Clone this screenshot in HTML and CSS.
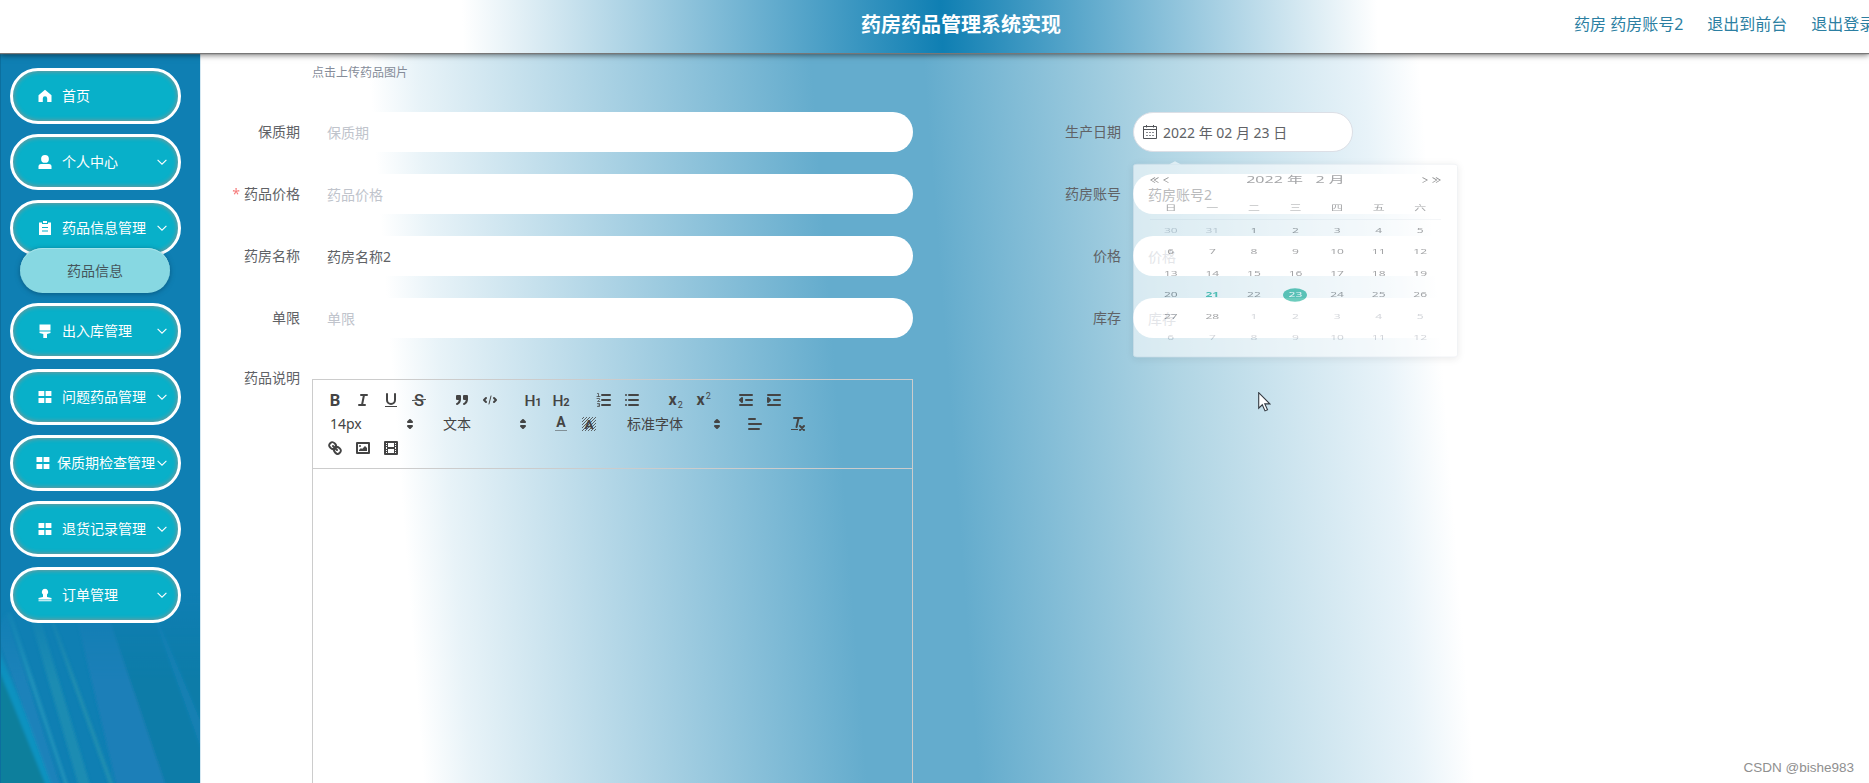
FILE: index.html
```html
<!DOCTYPE html>
<html lang="zh-CN">
<head>
<meta charset="utf-8">
<title>药房药品管理系统实现</title>
<link rel="stylesheet" href="styles.css">
</head>
<body>
<svg width="0" height="0" class="defs">
  <symbol id="down" viewBox="0 0 10 6"><path d="M.6.8 5 5.200 9.400.8" fill="none" stroke="currentColor" stroke-width="1.100"/></symbol>
  <symbol id="grid" viewBox="0 0 14 14"><path d="M.5 1h5.800v5H.5zM7.600 1h5.800v5H7.600zM.5 8h5.800v5H.5zM7.600 8h5.800v5H7.600z" fill="currentColor"/></symbol>
  <symbol id="arrows" viewBox="0 0 18 18"><path class="fs" d="M7 11l2 2 2-2zM7 7l2-2 2 2z"/></symbol>
  <symbol id="prev" viewBox="0 0 6 11"><path d="M5.500 1 .8 5.500l4.700 4.500" fill="none" stroke="currentColor" stroke-width="1.100"/></symbol>
  <symbol id="next" viewBox="0 0 6 11"><path d="M.5 1l4.700 4.500L.5 10" fill="none" stroke="currentColor" stroke-width="1.100"/></symbol>
  <symbol id="prev2" viewBox="0 0 9 11"><path d="M5 1 .8 5.500 5 10M8.500 1 4.300 5.500 8.500 10" fill="none" stroke="currentColor" stroke-width="1.100"/></symbol>
  <symbol id="next2" viewBox="0 0 9 11"><path d="M.5 1l4.200 4.500L.5 10M4 1l4.200 4.500L4 10" fill="none" stroke="currentColor" stroke-width="1.100"/></symbol>
</svg>
<header class="header">
  <h1 class="title">药房药品管理系统实现</h1>
  <nav class="nav"><span>药房 药房账号2</span><span>退出到前台</span><span>退出登录</span></nav>
</header>
<div class="body">
  <aside class="side">
    <svg class="rays" viewBox="0 0 200 730" preserveAspectRatio="none">
      <defs>
        <filter id="soft"><feGaussianBlur stdDeviation="1.6"/></filter>
        <linearGradient id="fade" x1="0" y1="0" x2="0" y2="1"><stop offset=".74" stop-color="#000"/><stop offset=".86" stop-color="#fff"/></linearGradient>
        <mask id="low"><rect width="200" height="730" fill="url(#fade)"/></mask>
      </defs>
      <g filter="url(#soft)" mask="url(#low)">
        <path d="M70 540h150v200h-50z" fill="#0a7ba8"/>
        <path d="M-5 600 50 740H-5z" fill="#087f9c"/>
        <path d="M-5 590-5 610 46 735h10z" fill="#0d92c0"/>
        <path d="M5 560 62 740H54L-5 580z" fill="#1b82ba"/>
        <path d="M38 560 92 740H80L28 560z" fill="#1a8cb2"/>
        <path d="M10 560 70 740h-3L6 560z" fill="#2494bb"/>
        <path d="M50 560 116 740h-4L47 560z" fill="#2090b0"/>
        <path d="M70 540h30l68 200h-50z" fill="#1b7fb8"/>
        <path d="M155 560 206 680v30L152 560z" fill="#1280b3"/>
      </g>
    </svg>
    <ul class="menu">
      <li class="item"><svg class="mi" viewBox="0 0 14 14"><path d="M7 .8.5 6.300V13h4.300V9.500a2.200 2.200 0 0 1 4.400 0V13h4.300V6.300z" fill="currentColor"/></svg><span>首页</span></li>
      <li class="item"><svg class="mi" viewBox="0 0 14 14"><circle cx="7" cy="3.900" r="3.900" fill="currentColor"/><path d="M.5 14v-2.500q0-2.500 2.500-2.500h8q2.500 0 2.500 2.500V14z" fill="currentColor"/></svg><span>个人中心</span><svg class="down"><use href="#down"/></svg></li>
      <li class="item"><svg class="mi" viewBox="0 0 14 14"><path d="M1 1.500h3V3h6V1.500h3V14H1z M5 0h4v2H5z" fill="currentColor"/><path d="M4 6.500h6M4 10h6" stroke="#08b0c9" stroke-width="1.200"/></svg><span>药品信息管理</span><svg class="down"><use href="#down"/></svg></li>
      <li class="sub">药品信息</li>
      <li class="item"><svg class="mi" viewBox="0 0 14 14"><path d="M1.500.5h11v6h-11zM1.500 7.500h11v1.500L9 10v4H5.300v-4L1.500 9z" fill="currentColor"/></svg><span>出入库管理</span><svg class="down"><use href="#down"/></svg></li>
      <li class="item"><svg class="mi"><use href="#grid"/></svg><span>问题药品管理</span><svg class="down"><use href="#down"/></svg></li>
      <li class="item long"><svg class="mi"><use href="#grid"/></svg><span>保质期检查管理</span><svg class="down"><use href="#down"/></svg></li>
      <li class="item"><svg class="mi"><use href="#grid"/></svg><span>退货记录管理</span><svg class="down"><use href="#down"/></svg></li>
      <li class="item"><svg class="mi" viewBox="0 0 14 14"><path d="M7 .8a3.200 3.200 0 0 1 2 5.700v2.500l4.500 1v1.500h-13V10L5 9V6.500A3.200 3.200 0 0 1 7 .8zM.5 12.300h13v1H.5z" fill="currentColor"/></svg><span>订单管理</span><svg class="down"><use href="#down"/></svg></li>
    </ul>
  </aside>
  <main class="main">
    <p class="tip">点击上传药品图片</p>
    <div class="row">
      <div class="field"><label>保质期</label><div class="input ph">保质期</div></div>
      <div class="field"><label>生产日期</label><div class="input date">
        <svg class="cal-ico" viewBox="0 0 14 14"><path d="M.5 1.500h13v12H.5zM.5 4.500h13M3.500 0v2.500M10.500 0v2.500" fill="none" stroke="#505358"/><path d="M3 7.500h2M6 7.500h2M9 7.500h2M3 10.500h2M6 10.500h2M9 10.500h2" stroke="#8a8d93"/></svg>
        <span>2022 年 02 月 23 日</span></div></div>
    </div>
    <div class="row">
      <div class="field"><label><i>*</i>药品价格</label><div class="input ph">药品价格</div></div>
      <div class="field"><label>药房账号</label><div class="input">药房账号2</div></div>
    </div>
    <div class="row">
      <div class="field"><label>药房名称</label><div class="input">药房名称2</div></div>
      <div class="field"><label>价格</label><div class="input ph">价格</div></div>
    </div>
    <div class="row">
      <div class="field"><label>单限</label><div class="input ph">单限</div></div>
      <div class="field"><label>库存</label><div class="input ph">库存</div></div>
    </div>
    <div class="field rich">
      <label>药品说明</label>
      <div class="editor">
        <div class="toolbar">
          <div class="line">
            <div class="grp">
              <svg class="q" viewBox="0 0 18 18"><text x="9" y="15" class="g" font-size="16.500">B</text></svg>
              <svg class="q" viewBox="0 0 18 18"><path class="s" d="M7 4h6M5 14h6M8 14 10 4"/></svg>
              <svg class="q" viewBox="0 0 18 18"><path class="s" d="M5 3v6a4 4 0 0 0 8 0V3"/><path class="f" d="M3 15h12v1H3z"/></svg>
              <svg class="q" viewBox="0 0 18 18"><text x="9" y="15" class="g m" font-size="16.500">S</text><path class="t" d="M2.500 9.500 15.500 8.500"/></svg>
            </div>
            <div class="grp">
              <svg class="q" viewBox="0 0 18 18"><path class="fs" d="M4 5h3v3H4zM11 5h3v3h-3z"/><path class="fs" d="M7 8c0 4-3 5-3 5M14 8c0 4-3 5-3 5"/></svg>
              <svg class="q" viewBox="0 0 18 18"><path class="s" d="M5 7 3 9l2 2M13 7l2 2-2 2"/><path class="t" d="M10 5 8 13"/></svg>
            </div>
            <div class="grp">
              <svg class="q" viewBox="0 0 18 18"><text x="6" y="14.500" class="g m" font-size="15.500">H</text><text x="14.500" y="14.500" class="g" font-size="11">1</text></svg>
              <svg class="q" viewBox="0 0 18 18"><text x="6" y="14.500" class="g m" font-size="15.500">H</text><text x="14.500" y="14.500" class="g" font-size="11">2</text></svg>
            </div>
            <div class="grp">
              <svg class="q" viewBox="0 0 18 18"><path class="s" d="M7 4h8M7 9h8M7 14h8"/><path class="t d" d="M2.500 2.500h1v3M2 5.500h3M2 7.500h2.500v1L2.500 10.500H5M2.500 12.500h2v3h-2M3 14h1.500"/></svg>
              <svg class="q" viewBox="0 0 18 18"><path class="s" d="M6 4h9M6 9h9M6 14h9M3 4h0M3 9h0M3 14h0"/></svg>
            </div>
            <div class="grp">
              <svg class="q" viewBox="0 0 18 18"><text x="6.500" y="14" class="g" font-size="16">x</text><text x="14.300" y="16.500" class="g n" font-size="9">2</text></svg>
              <svg class="q" viewBox="0 0 18 18"><text x="6.500" y="14" class="g" font-size="16">x</text><text x="14.300" y="8" class="g n" font-size="9">2</text></svg>
            </div>
            <div class="grp">
              <svg class="q" viewBox="0 0 18 18"><path class="s" d="M3 14h12M3 4h12M9 9h6"/><path class="fs" d="M5 7v4L3 9z"/></svg>
              <svg class="q" viewBox="0 0 18 18"><path class="s" d="M3 14h12M3 4h12M9 9h6"/><path class="fs" d="M3 7v4l2-2z"/></svg>
            </div>
          </div>
          <div class="line">
            <div class="picker"><span>14px</span><svg><use href="#arrows"/></svg></div>
            <div class="picker"><span>文本</span><svg><use href="#arrows"/></svg></div>
            <div class="grp">
              <svg class="q" viewBox="0 0 18 18"><text x="9" y="12.300" class="g" font-size="14">A</text><path d="M3 15.500h12" stroke="#444" opacity=".5"/></svg>
              <svg class="q" viewBox="0 0 18 18"><defs><pattern id="hatch" width="3" height="3" patternUnits="userSpaceOnUse"><path d="M0 3 3 0" stroke="#444" stroke-width=".8"/></pattern></defs><path d="M2 2h14v14H2z" fill="url(#hatch)"/><text x="9" y="14" class="g" font-size="13.500">A</text></svg>
            </div>
            <div class="picker wide"><span>标准字体</span><svg><use href="#arrows"/></svg></div>
            <div class="grp"><svg class="q" viewBox="0 0 18 18"><path class="s" d="M3 9h12M3 14h10M3 4h6"/></svg></div>
            <div class="grp"><svg class="q" viewBox="0 0 18 18"><path class="s" d="M5 3h8M7.500 12 9.600 3"/><path class="f" d="M2 14h7v1H2z"/><path class="s" d="m11 11 4 4M15 11l-4 4"/></svg></div>
          </div>
          <div class="line">
            <div class="grp">
              <svg class="q" viewBox="0 0 18 18"><path class="s" d="M7 7l4 4M8.900 4.577a3.476 3.476 0 0 1 .36 4.679A3.476 3.476 0 0 1 4.577 8.900C3.185 7.500 2.035 6.400 4.217 4.217S7.500 3.185 8.900 4.577ZM13.423 9.100a3.476 3.476 0 0 0-4.679-.36 3.476 3.476 0 0 0 .36 4.679c1.392 1.392 2.500 2.542 4.679.36S14.815 10.500 13.423 9.100Z"/></svg>
              <svg class="q" viewBox="0 0 18 18"><path class="s" d="M3 4h12v10H3z"/><circle class="f" cx="6" cy="7" r="1"/><path class="f" d="M5 12v-1l2-2 1 1 3-3 2 2v3z"/></svg>
              <svg class="q" viewBox="0 0 18 18"><path class="s" d="M3 3h12v12H3z"/><path class="f" d="M5 3h1v12H5zM12 3h1v12h-1zM5 8h8v2H5zM3 5h3v1H3zM3 7h3v1H3zM3 10h3v1H3zM3 12h3v1H3zM12 5h3v1h-3zM12 7h3v1h-3zM12 10h3v1h-3zM12 12h3v1h-3z"/></svg>
            </div>
          </div>
        </div>
        <div class="content"></div>
      </div>
    </div>
    <section class="calendar">
      <div class="cal-head"><svg class="a2"><use href="#prev2"/></svg><svg class="a1"><use href="#prev"/></svg><b>2022 年&nbsp;&nbsp; 2 月</b><svg class="a1"><use href="#next"/></svg><svg class="a2"><use href="#next2"/></svg></div>
      <div class="days week"><span>日</span><span>一</span><span>二</span><span>三</span><span>四</span><span>五</span><span>六</span></div>
      <div class="days">
        <span class="o">30</span><span class="o">31</span><span>1</span><span>2</span><span>3</span><span>4</span><span>5</span>
        <span>6</span><span>7</span><span>8</span><span>9</span><span>10</span><span>11</span><span>12</span>
        <span>13</span><span>14</span><span>15</span><span>16</span><span>17</span><span>18</span><span>19</span>
        <span>20</span><span class="today">21</span><span>22</span><span><em>23</em></span><span>24</span><span>25</span><span>26</span>
        <span>27</span><span>28</span><span class="o">1</span><span class="o">2</span><span class="o">3</span><span class="o">4</span><span class="o">5</span>
        <span class="o">6</span><span class="o">7</span><span class="o">8</span><span class="o">9</span><span class="o">10</span><span class="o">11</span><span class="o">12</span>
      </div>
    </section>
  </main>
</div>
<svg class="cursor" viewBox="0 0 13 20"><path d="M.7.7v15.500l3.600-3.400 2.700 6.100 2.500-1.100-2.700-5.900h5z" fill="#fff" stroke="#333a42" stroke-width="1.100"/></svg>
<div class="mark">CSDN @bishe983</div>
</body>
</html>
```
FILE: styles.css
```css
* { box-sizing: border-box; }
body {
  margin: 0; width: 1869px; height: 783px; overflow: hidden; position: relative;
  display: flex; flex-direction: column; background: #fff;
  font: 14px/20px "Noto Sans", "Noto Sans CJK SC", sans-serif; color: #606266;
}
.defs { position: absolute; }
.header {
  height: 53px; flex: none; position: relative; z-index: 2; display: flex; align-items: flex-start;
  padding: 12px 0 0 861px;
  background: linear-gradient(88deg, #fff 463px, #0f7fb3 942px, #fff 1378px);
  box-shadow: 0 1px 1px #777, 0 2px 6px rgba(0, 0, 0, .55);
}
.title { margin: 0; width: 713px; flex: none; font-size: 20px; line-height: 25px; font-weight: 700; color: #fff; }
.nav { display: flex; gap: 24px; font-size: 16px; line-height: 24px; color: #2c7fa2; white-space: nowrap; }
.nav span { flex: none; }
.body { flex: 1; display: flex; min-height: 0; overflow: hidden; }
.side { width: 200px; flex: none; position: relative; background: #0f7fb3; border-left: 1px solid #0c6f9e; }
.rays { position: absolute; inset: 0; width: 100%; height: 100%; }
.menu { position: relative; margin: 0; padding: 15px 19px 0 9px; list-style: none; display: flex; flex-direction: column; }
.item {
  height: 56px; margin-bottom: 10px; padding: 0 11px 0 24px; display: flex; align-items: center;
  border: 3px solid #fff; border-radius: 29px; background: #08b0c9; color: #fff; white-space: nowrap;
  box-shadow: inset 0 0 5px #a08c84;
}
.item span { margin-left: 10px; }
.mi { width: 14px; height: 14px; margin-left: 1px; flex: none; }
.down { width: 10px; height: 6px; margin-left: auto; flex: none; }
.long { padding-left: 22px; }
.long span { margin-left: 7px; }
.sub {
  height: 45px; margin: -18px 0 10px 10px; width: 150px; position: relative; z-index: 1;
  border-radius: 24px; background: #87d8e2; color: #45565c; text-align: center; line-height: 46px;
  box-shadow: 0 1px 5px rgba(0, 60, 90, .55), inset 0 1px 0 #a5e3ea;
}
.main {
  flex: 1; position: relative; min-width: 0; display: flex; flex-direction: column; border-left: 1px solid #d5e8f2;
  background: linear-gradient(85.6deg, #fff 222px, #e8f3f8 270px, #64accd 664px, #64accd 776px, #b0d5e4 1004px, #e8f3f9 1213px, #fff 1270px);
}
.tip { margin: 10px 0 29px 111px; font-size: 12px; line-height: 20px; color: #858c99; }
.row { display: flex; gap: 108px; height: 40px; margin-bottom: 22px; flex: none; }
.field { display: flex; width: 713px; flex: none; margin-left: -1px; }
.row .field + .field { margin-left: 0; }
.field label { width: 100px; margin-right: 12px; flex: none; text-align: right; line-height: 40px; }
.field i { color: #f56c6c; font-style: normal; margin-right: 4px; opacity: .9; }
.input { flex: 1; height: 40px; border-radius: 20px; background: #fff; padding-left: 15px; line-height: 41px; }
.ph { color: #c0c4cc; }
.date { flex: none; width: 220px; border: 1px solid #dcdfe6; padding-left: 9px; display: flex; align-items: center; gap: 6px; white-space: nowrap; }
.cal-ico { width: 14px; height: 14px; }
.rich { margin-top: 19px; flex: 1; min-height: 0; }
.field.rich label { line-height: 20px; margin-top: -11px; }
.editor { flex: 1; border: 1px solid #ccc; border-bottom: 0; color: #444; }
.toolbar { padding: 8px; height: 89px; border-bottom: 1px solid #ccc; }
.line { display: flex; gap: 15px; height: 24px; }
.grp { display: flex; }
.q { width: 28px; height: 24px; padding: 3px 5px; }
.s, .t, .fs { fill: none; stroke: #444; stroke-width: 2; stroke-linecap: round; stroke-linejoin: round; }
.t { stroke-width: 1; }
.d { opacity: .75; }
.fs { fill: #444; }
.f { fill: #444; }
.g { font-family: Roboto, sans-serif; font-weight: 700; fill: #444; text-anchor: middle; }
.m { font-weight: 500; }
.n { font-weight: 400; }
.picker { width: 98px; padding-left: 9px; display: flex; justify-content: space-between; align-items: center; line-height: 22px; }
.picker svg { width: 18px; height: 18px; }
.wide { width: 108px; }
.calendar {
  position: absolute; left: 932px; top: 111px; width: 325px; height: 342px; padding: 12px 16px;
  background: #fff; border: 1px solid #e4e7ed; border-radius: 4px; opacity: .57;
  box-shadow: 0 2px 12px rgba(0, 0, 0, .15); transform: scaleY(.565); transform-origin: top; font-size: 12px;
}
.calendar::before {
  content: ""; position: absolute; left: 35px; top: -6px;
  border: 6px solid transparent; border-top: 0; border-bottom-color: #fff;
}
.cal-head { display: flex; height: 30px; align-items: center; gap: 4px; }
.cal-head b { flex: 1; text-align: center; font-weight: 400; font-size: 16px; }
.a1 { width: 6px; height: 11px; color: #303133; }
.a2 { width: 9px; height: 11px; color: #303133; }
.days { display: grid; grid-template-columns: repeat(7, 1fr); grid-auto-rows: 38px; text-align: center; line-height: 38px; }
.week { margin-top: 12px; grid-auto-rows: 43px; line-height: 46px; border-bottom: 1px solid #dfe4ea; }
.o { color: #b4b8c0; }
.today { color: #00a890; font-weight: 700; }
.days em { display: block; width: 24px; height: 24px; margin: 7px auto; border-radius: 50%; background: #00a68c; color: #fff; font-style: normal; line-height: 24px; }
.cursor { position: absolute; left: 1258px; top: 392px; width: 13px; height: 20px; z-index: 3; }
.mark { position: absolute; right: 15px; bottom: 5px; font: 13.5px/20px "Liberation Sans", sans-serif; color: #8f8f8f; }
```
